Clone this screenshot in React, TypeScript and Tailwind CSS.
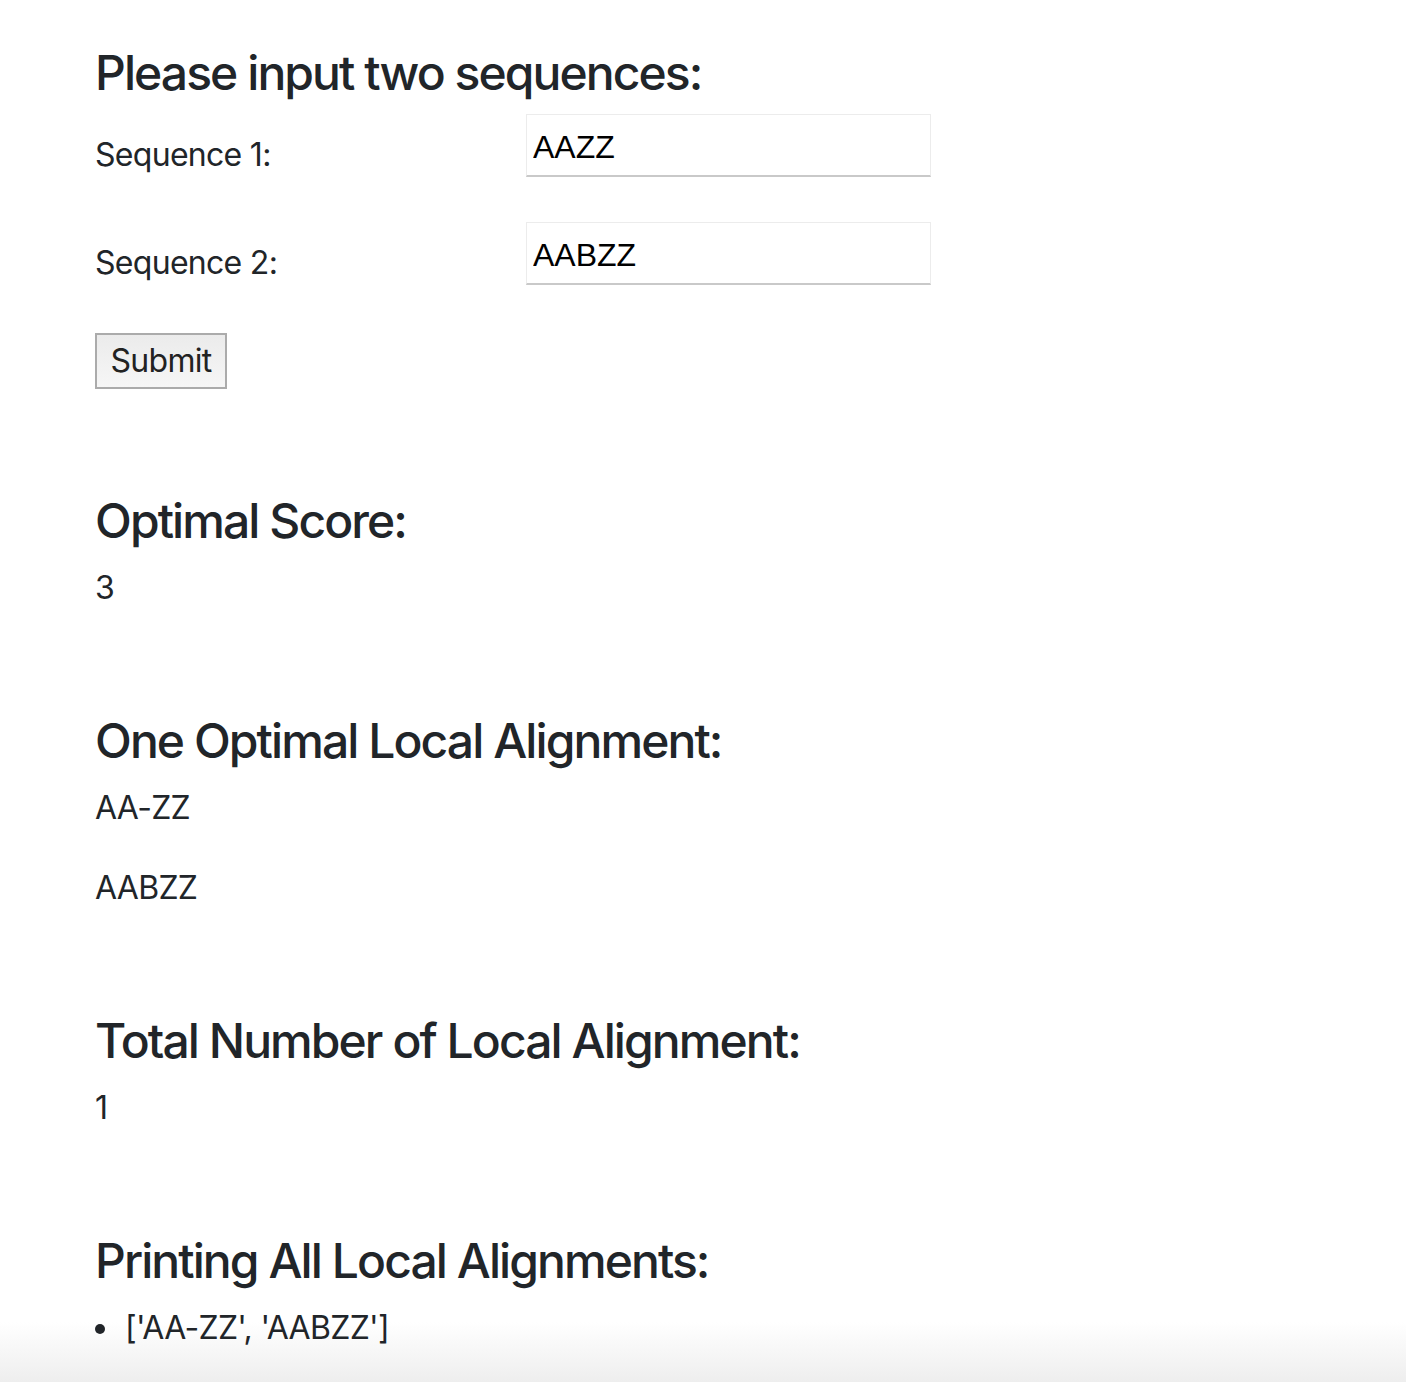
import React from 'react';

const results = {
  score: 3,
  alignment: ['AA-ZZ', 'AABZZ'],
  total: 1,
  all: ["['AA-ZZ', 'AABZZ']"],
};

function SeqRow({ label, value, className }: { label: string; value: string; className: string }) {
  return (
    <div className={`flex items-start ${className}`}>
      <label className="w-[431px] mt-[19px] leading-[44px]">{label}</label>
      <input
        type="text"
        defaultValue={value}
        className="w-[405px] h-[63px] border border-[#ececec] border-b-2 border-b-[#c9c9c9] pl-[6px] pt-[4px] pb-0 text-[32px] tracking-normal text-black outline-none font-['Liberation_Sans',Arial,sans-serif]"
      />
    </div>
  );
}

function Heading({ children, className }: { children: React.ReactNode; className: string }) {
  return <h4 className={`text-[48px] font-medium leading-[58px] tracking-[-0.04em] ${className}`}>{children}</h4>;
}

export default function App() {
  return (
    <div className="h-[1382px] overflow-hidden bg-[linear-gradient(to_bottom,#ffffff_1322px,#eeeeee_1382px)] text-[#212529] text-[32px] tracking-[-0.022em] font-['Inter','Noto_Sans',sans-serif]">
      <div className="pl-[95px] pt-[44px]">
        <Heading className="">Please input two sequences:</Heading>

        <form onSubmit={(e) => e.preventDefault()}>
          <SeqRow label="Sequence 1:" value="AAZZ" className="mt-[12px]" />
          <SeqRow label="Sequence 2:" value="AABZZ" className="mt-[45px]" />
          <button
            type="submit"
            className="mt-[48px] w-[132px] h-[56px] border-2 border-[#ababab] bg-[linear-gradient(to_bottom,#ebebeb,#f6f6f6)] text-[32px] leading-none text-[#222]"
          >
            Submit
          </button>
        </form>

        <Heading className="mt-[103px]">Optimal Score:</Heading>
        <p className="mt-[14px] leading-[48px]">{results.score}</p>

        <Heading className="mt-[100px]">One Optimal Local Alignment:</Heading>
        <p className="mt-[14px] leading-[48px]">{results.alignment[0]}</p>
        <p className="mt-[32px] leading-[48px]">{results.alignment[1]}</p>

        <Heading className="mt-[100px]">Total Number of Local Alignment:</Heading>
        <p className="mt-[14px] leading-[48px]">{results.total}</p>

        <Heading className="mt-[100px]">Printing All Local Alignments:</Heading>
        <ul className="mt-[14px]">
          {results.all.map((a) => (
            <li key={a} className="flex items-center leading-[48px]">
              <span className="w-[10px] h-[10px] rounded-full bg-[#212529] mr-[20px] mt-[2px]" />
              {a}
            </li>
          ))}
        </ul>
      </div>
    </div>
  );
}
